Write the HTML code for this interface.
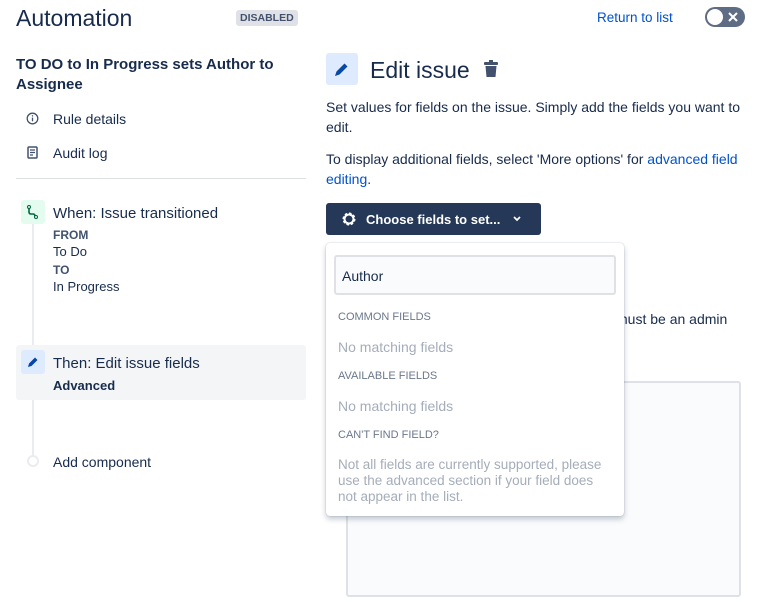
<!DOCTYPE html>
<html><head><meta charset="utf-8"><style>
*{margin:0;padding:0;box-sizing:border-box}
body{width:775px;height:602px;background:#fff;font-family:"Liberation Sans",sans-serif;color:#172b4d;position:relative;overflow:hidden;font-size:14px}
.a{position:absolute;white-space:nowrap}
.sm{font-size:11px;color:#6b778c}
.gray{color:#a5adba}
</style></head><body>
<div class="a" style="left:16px;top:5px;font-size:23px;color:#172b4d">Automation</div>
<div class="a" style="left:236px;top:10px;background:#dfe1e6;color:#42526e;font-size:10.5px;font-weight:bold;padding:2px 4px;border-radius:3px">DISABLED</div>
<div class="a" style="left:597px;top:10px;color:#0052cc;font-size:13.5px">Return to list</div>
<div class="a" style="left:705px;top:7px;width:40px;height:20px;border-radius:10px;background:#5e6c84"></div>
<div class="a" style="left:707px;top:9px;width:16px;height:16px;border-radius:8px;background:#fff"></div>
<svg class="a" style="left:727px;top:11px" width="12" height="12" viewBox="0 0 12 12"><path d="M2 2L10 10M10 2L2 10" stroke="#fff" stroke-width="2"/></svg>

<div class="a" style="left:16px;top:55px;font-size:15px;font-weight:600;line-height:20px;white-space:normal;width:290px;color:#172b4d">TO DO to In Progress sets Author to Assignee</div>
<svg class="a" style="left:26px;top:112px" width="13" height="13" viewBox="0 0 14 14"><circle cx="7" cy="7" r="5.7" fill="none" stroke="#42526e" stroke-width="1.4"/><rect x="6.3" y="6" width="1.4" height="4" fill="#42526e"/><circle cx="7" cy="4.2" r=".8" fill="#42526e"/></svg>
<div class="a" style="left:53px;top:111px;font-size:14px">Rule details</div>
<svg class="a" style="left:27px;top:146px" width="11" height="13" viewBox="0 0 11 13"><rect x="1" y="1" width="9" height="11" rx="1" fill="none" stroke="#42526e" stroke-width="1.5"/><path d="M3 4h5M3 6.5h5M3 9h3" stroke="#42526e" stroke-width="1.2"/></svg>
<div class="a" style="left:53px;top:145px;font-size:14px">Audit log</div>
<div class="a" style="left:16px;top:178px;width:290px;height:1px;background:#dfe1e6"></div>

<div class="a" style="left:32px;top:215px;width:2px;height:240px;background:#ebecf0"></div>
<div class="a" style="left:21px;top:200px;width:24px;height:24px;border-radius:3px;background:#e3fcef"></div>
<svg class="a" style="left:25px;top:204px" width="16" height="16" viewBox="0 0 16 16"><path d="M4 3v5q0 2 2 2h2q2 0 2 2v1" fill="none" stroke="#006644" stroke-width="1.6"/><circle cx="4" cy="3" r="1.5" fill="#e3fcef" stroke="#006644"/><circle cx="11" cy="13" r="1.5" fill="#e3fcef" stroke="#006644"/></svg>
<div class="a" style="left:53px;top:205px;font-size:15px">When: Issue transitioned</div>
<div class="a" style="left:53px;top:228px;font-size:12px;font-weight:bold;color:#42526e">FROM</div>
<div class="a" style="left:53px;top:244px;font-size:13px">To Do</div>
<div class="a" style="left:53px;top:263px;font-size:12px;font-weight:bold;color:#42526e">TO</div>
<div class="a" style="left:53px;top:279px;font-size:13px">In Progress</div>

<div class="a" style="left:16px;top:345px;width:290px;height:55px;background:#f4f5f7;border-radius:3px"></div>
<div class="a" style="left:21px;top:350px;width:24px;height:24px;border-radius:3px;background:#deebff"></div>
<svg class="a" style="left:26px;top:355px" width="14" height="14" viewBox="0 0 14 14"><path d="M2 12l1-3.5 6-6 2.5 2.5-6 6z" fill="#0747a6"/></svg>
<div class="a" style="left:53px;top:355px;font-size:15px">Then: Edit issue fields</div>
<div class="a" style="left:53px;top:378px;font-size:13px;font-weight:bold">Advanced</div>
<div class="a" style="left:27px;top:455px;width:12px;height:12px;border-radius:6px;border:2px solid #ebecf0;background:#fff"></div>
<div class="a" style="left:53px;top:454px;font-size:14px">Add component</div>

<div class="a" style="left:326px;top:53px;width:32px;height:32px;border-radius:3px;background:#deebff"></div>
<svg class="a" style="left:333px;top:60px" width="18" height="18" viewBox="0 0 18 18"><path d="M2 16l1.5-4.5 8-8 3 3-8 8z" fill="#0747a6"/></svg>
<div class="a" style="left:370px;top:57px;font-size:23px">Edit issue</div>
<svg class="a" style="left:483px;top:60px" width="16" height="18" viewBox="0 0 16 18"><rect x="1" y="2" width="14" height="3" rx="1" fill="#42526e"/><rect x="6" y="0" width="4" height="3" fill="#42526e"/><path d="M2.5 6h11l-1 11h-9z" fill="#42526e"/></svg>
<div class="a" style="left:326px;top:97px;font-size:14px;line-height:20px;white-space:normal;width:420px">Set values for fields on the issue. Simply add the fields you want to edit.</div>
<div class="a" style="left:326px;top:149px;font-size:14px;line-height:20px;white-space:normal;width:425px">To display additional fields, select 'More options' for <span style="color:#0052cc">advanced field editing</span>.</div>
<div class="a" style="left:326px;top:203px;width:215px;height:32px;background:#253858;border-radius:3px"></div>
<svg class="a" style="left:340px;top:210px" width="18" height="18" viewBox="0 0 18 18"><circle cx="9" cy="9" r="5" fill="none" stroke="#fff" stroke-width="3" stroke-dasharray="2.2 1.7"/><circle cx="9" cy="9" r="4.5" fill="none" stroke="#fff" stroke-width="2"/></svg>
<div class="a" style="left:366px;top:212px;font-size:13px;font-weight:bold;color:#fff">Choose fields to set...</div>
<svg class="a" style="left:512px;top:215px" width="10" height="8" viewBox="0 0 10 8"><path d="M2 2l3 3 3-3" fill="none" stroke="#fff" stroke-width="1.7"/></svg>

<div class="a" style="left:616px;top:311px;font-size:14px">must be an admin</div>
<div class="a" style="left:346px;top:381px;width:395px;height:216px;border:2px solid #dfe1e6;background:#fafbfc;border-radius:3px"></div>

<div class="a" style="left:326px;top:243px;width:298px;height:273px;background:#fff;border-radius:4px;box-shadow:0 3px 6px rgba(9,30,66,.25),0 0 1px rgba(9,30,66,.31)"></div>
<div class="a" style="left:334px;top:255px;width:282px;height:40px;border:2px solid #dfe1e6;background:#fafbfc;border-radius:3px"></div>
<div class="a" style="left:342px;top:268px;font-size:14px">Author</div>
<div class="a sm" style="left:338px;top:311px">COMMON FIELDS</div>
<div class="a gray" style="left:338px;top:339px">No matching fields</div>
<div class="a sm" style="left:338px;top:370px">AVAILABLE FIELDS</div>
<div class="a gray" style="left:338px;top:398px">No matching fields</div>
<div class="a sm" style="left:338px;top:429px">CAN'T FIND FIELD?</div>
<div class="a gray" style="left:338px;top:457px;white-space:normal;width:276px;font-size:13.5px;line-height:16px">Not all fields are currently supported, please use the advanced section if your field does not appear in the list.</div>
</body></html>
